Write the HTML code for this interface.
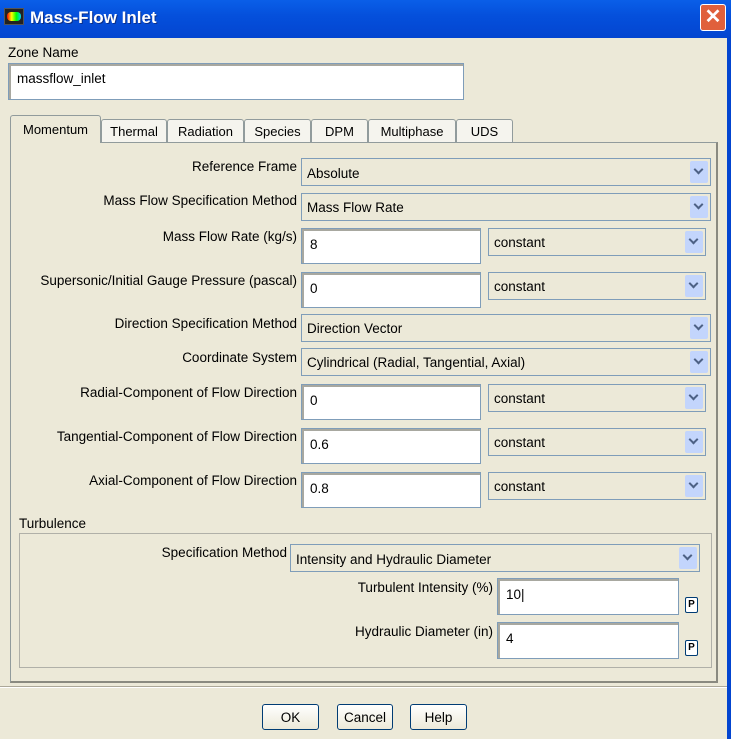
<!DOCTYPE html>
<html><head><meta charset="utf-8"><style>
*{box-sizing:border-box;margin:0;padding:0}
body{width:731px;height:739px;overflow:hidden;background:#ece9d8;font-family:"Liberation Sans",sans-serif;font-size:13.5px;color:#000;position:relative}
.a{position:absolute}
.title{left:0;top:0;width:731px;height:38px;background:linear-gradient(#0a5fe8,#0550dc 40%,#0345d0);}
.lbl{position:absolute;text-align:right;white-space:nowrap}
.inp{position:absolute;background:#fff;border:1px solid #7f9db9;box-shadow:inset 2px 2px 0 #a8a8a0;padding:8px 0 0 8px}
.cb{position:absolute;border:1px solid #7f9db9;background:#ece9d8;padding:6px 0 0 5px}
.cb::after{content:"";position:absolute;right:2px;top:2px;bottom:2px;width:18px;background:#c3d5fc;border-radius:2px}
.cb i{position:absolute;right:8px;top:50%;width:7px;height:7px;border-right:2px solid #4d6185;border-bottom:2px solid #4d6185;transform:rotate(45deg);z-index:2;margin-top:-6px}
.tab{position:absolute;top:119px;height:23px;border:1px solid #919b9c;border-bottom:none;background:#f5f4ee;padding:4px 0 0 0;text-align:center;border-radius:3px 3px 0 0;font-size:13px}
.btn{position:absolute;top:704px;height:26px;border:1px solid #003c74;border-radius:3px;background:linear-gradient(#fff,#ece9d8);text-align:center;padding-top:5px}
.p{position:absolute;width:13px;height:16px;border:1px solid #003c74;border-radius:2px;background:#fff;font-size:10px;font-weight:bold;text-align:center;line-height:14px}
</style></head><body>
<div class="a title"></div>
<div class="a" style="left:4px;top:8px;width:20px;height:17px;background:#222;border:1px solid #555"><div class="a" style="left:2px;top:3px;width:14px;height:9px;background:linear-gradient(90deg,#f00,#ff0,#0f0,#0cf);border-radius:4px"></div></div>
<div class="a" style="left:30px;top:8px;color:#fff;font-weight:bold;font-size:17px;text-shadow:1px 1px 0 #0b2f8a">Mass-Flow Inlet</div>
<div class="a" style="left:700px;top:4px;width:26px;height:27px;background:#e0603c;border:1px solid #fff;border-radius:3px;color:#fff;font-weight:bold;font-size:20px;text-align:center;line-height:24px">✕</div>
<div class="a" style="left:727px;top:38px;width:4px;height:701px;background:#0345d0"></div>
<div class="lbl" style="left:8px;top:45px">Zone Name</div>
<div class="inp" style="left:8px;top:63px;width:456px;height:37px;padding-top:7px">massflow_inlet</div>
<div class="a" style="left:10px;top:142px;width:708px;height:541px;border:1px solid #919b9c;border-right:2px solid #8a8a80;border-bottom:2px solid #8a8a80;background:#ece9d8"></div>
<div class="tab" style="left:10px;top:115px;width:91px;height:28px;background:#ece9d8;border-bottom:none;padding-top:6px;z-index:2">Momentum</div>
<div class="tab" style="left:101px;width:66px">Thermal</div>
<div class="tab" style="left:167px;width:77px">Radiation</div>
<div class="tab" style="left:244px;width:67px">Species</div>
<div class="tab" style="left:311px;width:57px">DPM</div>
<div class="tab" style="left:368px;width:88px">Multiphase</div>
<div class="tab" style="left:456px;width:57px">UDS</div>

<div class="lbl" style="right:434px;top:159px">Reference Frame</div>
<div class="cb" style="left:301px;top:158px;width:410px;height:28px;padding-top:7px">Absolute<i></i></div>
<div class="lbl" style="right:434px;top:193px">Mass Flow Specification Method</div>
<div class="cb" style="left:301px;top:193px;width:410px;height:28px;padding-top:6px">Mass Flow Rate<i></i></div>

<div class="lbl" style="right:434px;top:229px">Mass Flow Rate (kg/s)</div>
<div class="inp" style="left:301px;top:228px;width:180px;height:36px">8</div>
<div class="cb" style="left:488px;top:228px;width:218px;height:28px">constant<i></i></div>
<div class="lbl" style="right:434px;top:273px">Supersonic/Initial Gauge Pressure (pascal)</div>
<div class="inp" style="left:301px;top:272px;width:180px;height:36px">0</div>
<div class="cb" style="left:488px;top:272px;width:218px;height:28px">constant<i></i></div>

<div class="lbl" style="right:434px;top:316px">Direction Specification Method</div>
<div class="cb" style="left:301px;top:314px;width:410px;height:28px">Direction Vector<i></i></div>
<div class="lbl" style="right:434px;top:350px">Coordinate System</div>
<div class="cb" style="left:301px;top:348px;width:410px;height:28px">Cylindrical (Radial, Tangential, Axial)<i></i></div>

<div class="lbl" style="right:434px;top:385px">Radial-Component of Flow Direction</div>
<div class="inp" style="left:301px;top:384px;width:180px;height:36px">0</div>
<div class="cb" style="left:488px;top:384px;width:218px;height:28px">constant<i></i></div>
<div class="lbl" style="right:434px;top:429px">Tangential-Component of Flow Direction</div>
<div class="inp" style="left:301px;top:428px;width:180px;height:36px">0.6</div>
<div class="cb" style="left:488px;top:428px;width:218px;height:28px">constant<i></i></div>
<div class="lbl" style="right:434px;top:473px">Axial-Component of Flow Direction</div>
<div class="inp" style="left:301px;top:472px;width:180px;height:36px">0.8</div>
<div class="cb" style="left:488px;top:472px;width:218px;height:28px">constant<i></i></div>

<div class="lbl" style="left:19px;top:516px">Turbulence</div>
<div class="a" style="left:19px;top:533px;width:693px;height:135px;border:1px solid #b0b0a8"></div>
<div class="lbl" style="right:444px;top:545px">Specification Method</div>
<div class="cb" style="left:290px;top:544px;width:410px;height:28px;padding-top:7px">Intensity and Hydraulic Diameter<i></i></div>
<div class="lbl" style="right:238px;top:580px">Turbulent Intensity (%)</div>
<div class="inp" style="left:497px;top:578px;width:182px;height:37px">10|</div>
<div class="p" style="left:685px;top:597px">P</div>
<div class="lbl" style="right:238px;top:624px">Hydraulic Diameter (in)</div>
<div class="inp" style="left:497px;top:622px;width:182px;height:37px">4</div>
<div class="p" style="left:685px;top:640px">P</div>

<div class="a" style="left:0;top:686px;width:727px;height:2px;border-top:1px solid #aca899;border-bottom:1px solid #fff"></div>
<div class="btn" style="left:262px;width:57px">OK</div>
<div class="btn" style="left:337px;width:56px">Cancel</div>
<div class="btn" style="left:410px;width:57px">Help</div>
</body></html>
